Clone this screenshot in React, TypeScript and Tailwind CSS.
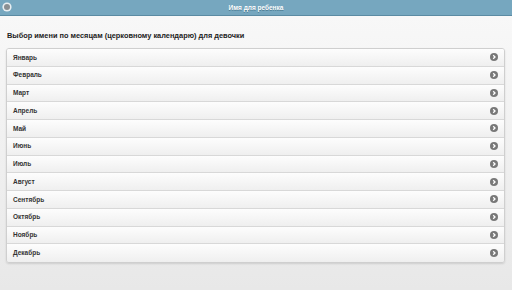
const months = [
  "Январь",
  "Февраль",
  "Март",
  "Апрель",
  "Май",
  "Июнь",
  "Июль",
  "Август",
  "Сентябрь",
  "Октябрь",
  "Ноябрь",
  "Декабрь",
];

function ArrowIcon() {
  return (
    <svg width="8" height="8" viewBox="0 0 8 8">
      <circle cx="4" cy="4" r="4" fill="#787878" />
      <path d="M3.2 2.3 L5 4 L3.2 5.7" stroke="#fff" strokeWidth="1.3" fill="none" />
    </svg>
  );
}

function HomeIcon() {
  return (
    <svg width="10" height="10" viewBox="0 0 10 10">
      <circle cx="5" cy="5" r="4.6" fill="#e8eef1" />
      <circle cx="5" cy="5" r="3" fill="#8a8f92" />
    </svg>
  );
}

export default function App() {
  return (
    <div className="w-[512px] h-[290px] overflow-hidden flex flex-col font-['Liberation_Sans',Arial,sans-serif] bg-gradient-to-b from-[#f9f9f9] to-[#e8e8e8]">
      <header className="h-[16px] shrink-0 relative flex items-center justify-center bg-[#76a7bf] border-b border-[#5b8ba3]">
        <div className="absolute left-[2px] top-[2px]">
          <HomeIcon />
        </div>
        <span className="text-[6.5px] font-bold text-white [text-shadow:0_1px_0_#4d7d94]">Имя для ребенка</span>
      </header>

      <main className="px-[6px] pt-[15px]">
        <h1 className="text-[7.4px] font-bold text-[#222] leading-[10px] pl-[1px]">
          Выбор имени по месяцам (церковному календарю) для девочки
        </h1>
        <ul className="mt-[7px] w-[499px] rounded-[3px] border border-[#cfcfcf] overflow-hidden shadow-[0_1px_2px_rgba(0,0,0,0.12)]">
          {months.map((m, i) => (
            <li
              key={m}
              className={`h-[17.75px] flex items-center justify-between pl-[6px] pr-[6px] bg-gradient-to-b from-[#fdfdfd] to-[#efefef] ${
                i < months.length - 1 ? "border-b border-[#d8d8d8]" : ""
              }`}
            >
              <span className="text-[6.5px] font-bold text-[#333]">{m}</span>
              <ArrowIcon />
            </li>
          ))}
        </ul>
      </main>
    </div>
  );
}
